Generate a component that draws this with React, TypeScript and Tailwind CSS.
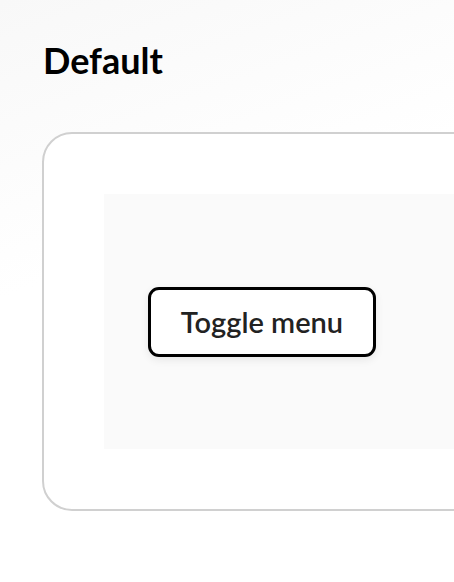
export default function App() {
  return (
    <div className="min-h-screen w-full overflow-hidden bg-[linear-gradient(160deg,#f8f8f8_0%,#ffffff_40%)] font-['Lato',sans-serif]">
      <div className="pl-[42px] pt-[34px]">
        <h1 className="pl-px text-[36px] font-bold leading-[52px] text-black">Default</h1>
        <div className="mt-[46px] w-[700px] rounded-[30px] border-2 border-[#d0d0d0] bg-white p-[60px]">
          <div className="flex h-[255px] items-center bg-[#fafafa] pl-[44px]">
            <button
              type="button"
              className="h-[70px] w-[228px] rounded-[11px] border-[3px] border-black bg-white text-[29px] font-semibold text-[#222] shadow-[0_3px_8px_rgba(0,0,0,0.08)]"
            >
              Toggle menu
            </button>
          </div>
        </div>
      </div>
    </div>
  );
}
